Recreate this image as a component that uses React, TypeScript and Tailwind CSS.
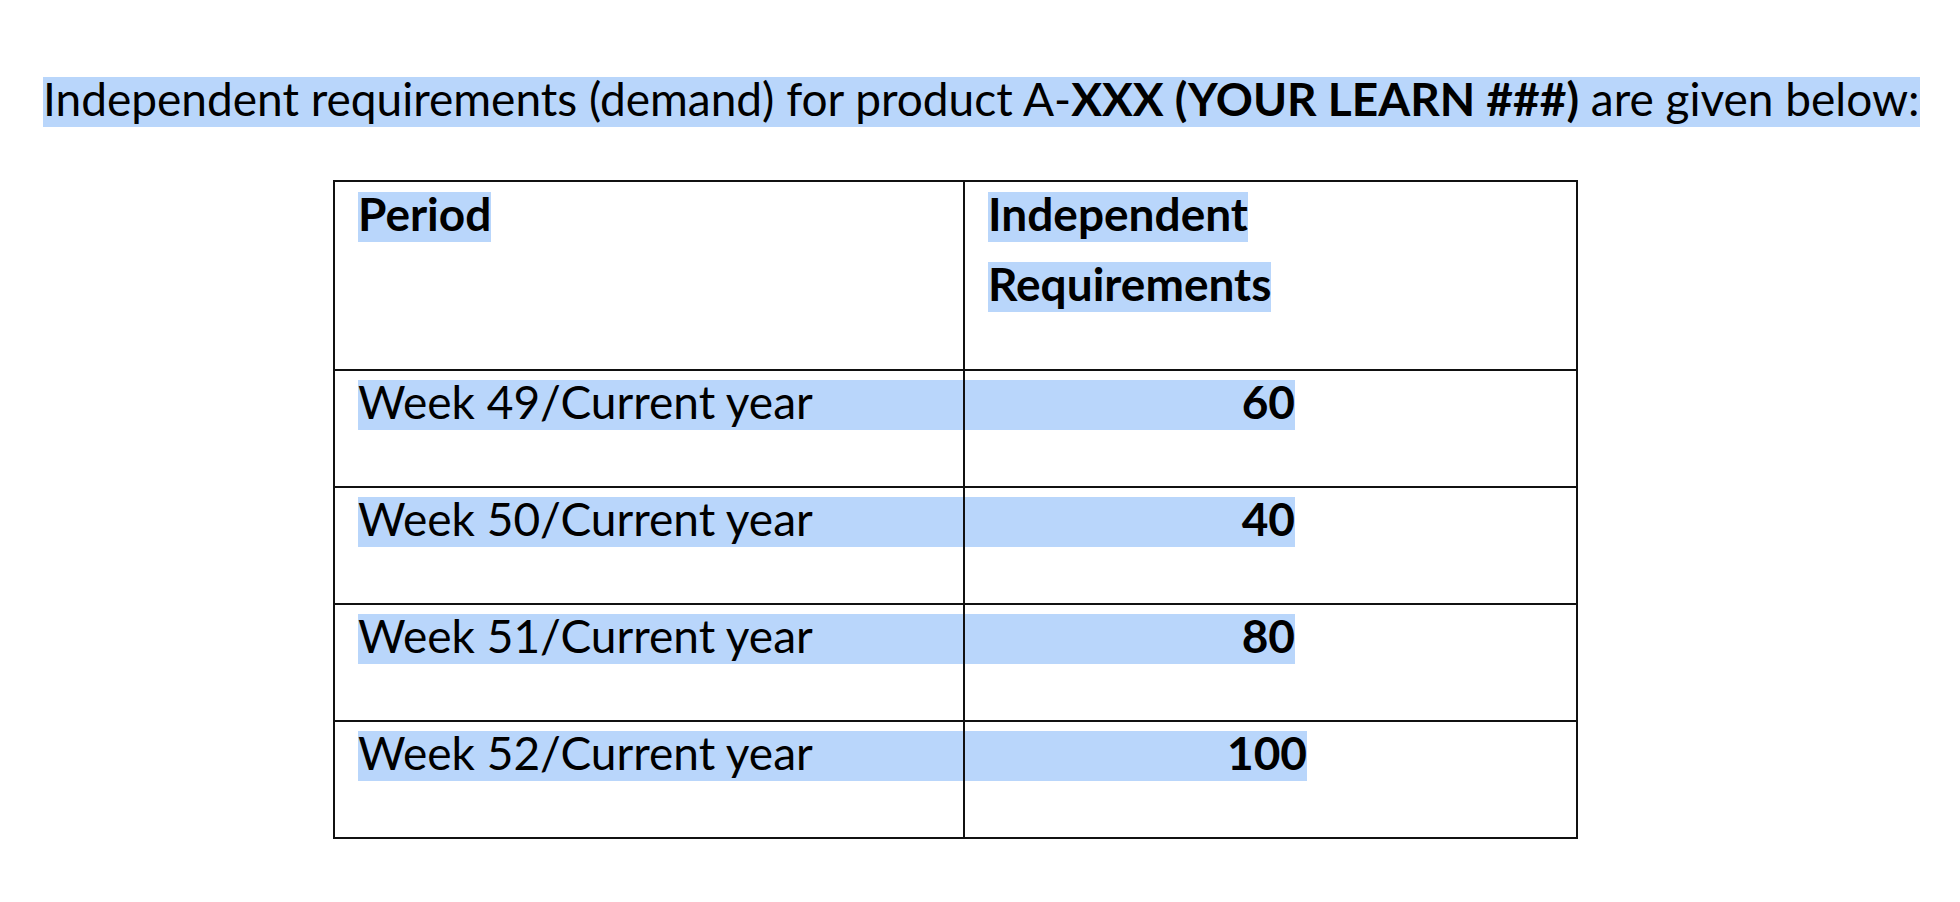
const rows = [
  { period: 'Week 49/Current year', qty: '60', end: 'w-[330px]' },
  { period: 'Week 50/Current year', qty: '40', end: 'w-[330px]' },
  { period: 'Week 51/Current year', qty: '80', end: 'w-[330px]' },
  { period: 'Week 52/Current year', qty: '100', end: 'w-[342px]' },
];

// selection highlight box, text baseline sits ~39px down
const hl = 'block h-[50px] leading-[43px] bg-[#b9d6fb] whitespace-nowrap';

export default function App() {
  return (
    <div className="min-h-[902px] w-[1960px] bg-white text-black font-['Lato','Open_Sans',sans-serif] text-[46px] leading-none">
      <div className="pt-[77px] pl-[43px]">
        <div className={hl + ' w-fit'}>
          Independent requirements (demand) for product A-<b className="font-bold">XXX (YOUR LEARN ###)</b> are given
          below:
        </div>
      </div>

      <div className="ml-[333px] mt-[53px] w-[1245px] border-2 border-[#111]">
        <div className="flex h-[187px]">
          <div className="w-[630px] shrink-0 border-r-2 border-[#111] pl-[23px] pt-[10px] font-bold">
            <span className={hl + ' w-fit'}>Period</span>
          </div>
          <div className="flex flex-1 flex-col gap-[20px] pl-[23px] pt-[10px] font-bold">
            <span className={hl + ' w-fit'}>Independent</span>
            <span className={hl + ' w-fit'}>Requirements</span>
          </div>
        </div>

        {rows.map((r) => (
          <div key={r.period} className="flex h-[117px] border-t-2 border-[#111]">
            <div className="w-[630px] shrink-0 border-r-2 border-[#111] pl-[23px] pt-[9px]">
              <span className={hl + ' w-full'}>{r.period}</span>
            </div>
            <div className="flex-1 pt-[9px] font-bold">
              <span className={hl + ' text-right ' + r.end}>{r.qty}</span>
            </div>
          </div>
        ))}
      </div>
    </div>
  );
}
